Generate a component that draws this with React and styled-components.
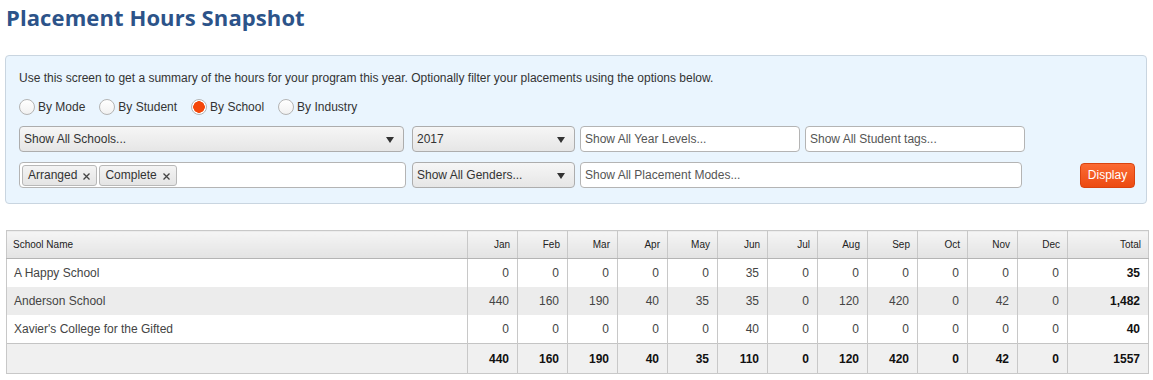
import React from "react";
import styled, { createGlobalStyle } from "styled-components";

const Global = createGlobalStyle`
  html, body { margin: 0; padding: 0; background: #fff; }
  body { font-family: "Liberation Sans", Arial, sans-serif; color: #333; }
`;

const Page = styled.div`
  padding: 3px 5px 0 5px;
`;

const Title = styled.h1`
  margin: 0 0 24px 1px;
  font-family: "Open Sans", "Liberation Sans", sans-serif;
  font-weight: 700;
  font-size: 22px;
  line-height: 28px;
  color: #2c5389;
  letter-spacing: 0.1px;
`;

const Panel = styled.section`
  width: 1142px;
  box-sizing: border-box;
  background: #eaf5fe;
  border: 1px solid #c9d5e0;
  border-radius: 4px;
  padding: 14px 10px 15px 13px;
  display: flex;
  flex-direction: column;
`;

const Intro = styled.p`
  margin: 0;
  font-size: 12px;
  line-height: 16px;
  color: #333;
`;

const RadioRow = styled.div`
  display: flex;
  align-items: center;
  gap: 14px;
  height: 20px;
  margin-top: 11px;
`;

const RadioLabel = styled.label`
  display: flex;
  align-items: center;
  gap: 3px;
  font-size: 12px;
  color: #333;
`;

const RadioDot = styled.span`
  width: 16px;
  height: 16px;
  box-sizing: border-box;
  border-radius: 50%;
  border: 1px solid #b4b4b4;
  background: ${(p) =>
    p.$on
      ? "radial-gradient(circle, #f4470a 0, #f4470a 5.5px, #fff 6px)"
      : "linear-gradient(#fff, #f1f1f1)"};
`;

const FieldRow = styled.div`
  display: flex;
  align-items: center;
  margin-top: ${(p) => p.$top}px;
`;

const Select = styled.div`
  position: relative;
  box-sizing: border-box;
  width: ${(p) => p.$w}px;
  margin-left: ${(p) => p.$ml || 0}px;
  height: 26px;
  border: 1px solid #adadad;
  border-radius: 4px;
  background: linear-gradient(#f6f6f6, #e6e6e6);
  font-size: 12px;
  line-height: 24px;
  padding-left: 4px;
  color: #333;
  &::after {
    content: "";
    position: absolute;
    right: 9px;
    top: 10px;
    border-left: 4px solid transparent;
    border-right: 4px solid transparent;
    border-top: 6px solid #333;
  }
`;

const TextBox = styled.div`
  box-sizing: border-box;
  width: ${(p) => p.$w}px;
  margin-left: ${(p) => p.$ml || 0}px;
  height: 26px;
  border: 1px solid #b4b4b4;
  border-radius: 4px;
  background: #fff;
  font-size: 12px;
  line-height: 24px;
  padding-left: 4px;
  color: #555;
  display: flex;
  align-items: center;
  gap: 2px;
`;

const TagBox = styled(TextBox)`
  padding-left: 2px;
`;

const Chip = styled.span`
  display: inline-flex;
  align-items: center;
  box-sizing: border-box;
  height: 21px;
  padding: 0 5px 0 5px;
  border: 1px solid #b8b8b8;
  border-radius: 3px;
  background: linear-gradient(#f4f4f4, #e4e4e4);
  color: #333;
  font-size: 12px;
  gap: 5px;
`;

const ChipX = styled.svg`
  width: 9px;
  height: 9px;
  margin-top: 2px;
`;

const Spacer = styled.div`
  flex: 1;
`;

const DisplayButton = styled.button`
  box-sizing: border-box;
  width: 55px;
  height: 25px;
  border: 1px solid #d9430f;
  border-radius: 4px;
  background: linear-gradient(#fb6a33, #ec4b12);
  color: #fff;
  font-family: "Liberation Sans", Arial, sans-serif;
  font-size: 12px;
  padding: 0;
  margin-right: 1px;
`;

const Table = styled.table`
  margin-top: 26px;
  margin-left: 1px;
  width: 1142px;
  table-layout: fixed;
  border-collapse: collapse;
  font-size: 12px;
  border: 1px solid #c8c8c8;
`;

const HeadCell = styled.th`
  height: 27px;
  padding: 0 7px 0 6px;
  font-size: 10px;
  font-weight: 400;
  color: #222;
  text-align: ${(p) => (p.$left ? "left" : "right")};
  background: linear-gradient(#f5f5f5, #e3e3e3);
  border-left: 1px solid #c8c8c8;
  border-bottom: 1px solid #b4b4b4;
`;

const Row = styled.tr`
  background: ${(p) => (p.$alt ? "#ececec" : "#fff")};
`;

const Cell = styled.td`
  height: 28px;
  padding: 0 8px 0 7px;
  color: ${(p) => (p.$bold ? "#111" : "#444")};
  font-weight: ${(p) => (p.$bold ? 700 : 400)};
  text-align: ${(p) => (p.$left ? "left" : "right")};
  border-left: 1px solid #c8c8c8;
`;

const FootRow = styled.tr`
  background: #f0f0f0;
  border-top: 1px solid #c4c4c4;
`;

const FootCell = styled.td`
  height: 29px;
  padding: 0 8px 0 7px;
  color: #111;
  font-weight: 700;
  text-align: right;
  border-left: 1px solid #c8c8c8;
`;

const months = ["Jan", "Feb", "Mar", "Apr", "May", "Jun", "Jul", "Aug", "Sep", "Oct", "Nov", "Dec"];

const rows = [
  { name: "A Happy School", v: [0, 0, 0, 0, 0, 35, 0, 0, 0, 0, 0, 0], total: "35" },
  { name: "Anderson School", v: [440, 160, 190, 40, 35, 35, 0, 120, 420, 0, 42, 0], total: "1,482" },
  { name: "Xavier's College for the Gifted", v: [0, 0, 0, 0, 0, 40, 0, 0, 0, 0, 0, 0], total: "40" },
];

const totals = [440, 160, 190, 40, 35, 110, 0, 120, 420, 0, 42, 0];

const X = () => (
  <ChipX viewBox="0 0 9 9">
    <path d="M1.5 1.5 L7.5 7.5 M7.5 1.5 L1.5 7.5" stroke="#444" strokeWidth="1.3" fill="none" />
  </ChipX>
);

const radios = [
  ["By Mode", false],
  ["By Student", false],
  ["By School", true],
  ["By Industry", false],
];

export default function App() {
  return (
    <>
      <Global />
      <Page>
        <Title>Placement Hours Snapshot</Title>
        <Panel>
          <Intro>
            Use this screen to get a summary of the hours for your program this year. Optionally filter your
            placements using the options below.
          </Intro>
          <RadioRow>
            {radios.map(([label, on]) => (
              <RadioLabel key={label}>
                <RadioDot $on={on} />
                {label}
              </RadioLabel>
            ))}
          </RadioRow>
          <FieldRow $top={9}>
            <Select $w={385}>Show All Schools...</Select>
            <Select $w={163} $ml={8}>2017</Select>
            <TextBox $w={220} $ml={5}>Show All Year Levels...</TextBox>
            <TextBox $w={220} $ml={5}>Show All Student tags...</TextBox>
          </FieldRow>
          <FieldRow $top={10}>
            <TagBox $w={387}>
              <Chip>
                Arranged <X />
              </Chip>
              <Chip>
                Complete <X />
              </Chip>
            </TagBox>
            <Select $w={163} $ml={6}>Show All Genders...</Select>
            <TextBox $w={442} $ml={5}>Show All Placement Modes...</TextBox>
            <Spacer />
            <DisplayButton>Display</DisplayButton>
          </FieldRow>
        </Panel>
        <Table>
          <colgroup>
            <col style={{ width: 461 }} />
            {months.map((m) => (
              <col key={m} style={{ width: 50 }} />
            ))}
            <col style={{ width: 81 }} />
          </colgroup>
          <thead>
            <tr>
              <HeadCell $left>School Name</HeadCell>
              {months.map((m) => (
                <HeadCell key={m}>{m}</HeadCell>
              ))}
              <HeadCell>Total</HeadCell>
            </tr>
          </thead>
          <tbody>
            {rows.map((r, i) => (
              <Row key={r.name} $alt={i === 1}>
                <Cell $left>{r.name}</Cell>
                {r.v.map((v, j) => (
                  <Cell key={j}>{v}</Cell>
                ))}
                <Cell $bold>{r.total}</Cell>
              </Row>
            ))}
          </tbody>
          <tfoot>
            <FootRow>
              <FootCell />
              {totals.map((v, j) => (
                <FootCell key={j}>{v}</FootCell>
              ))}
              <FootCell>1557</FootCell>
            </FootRow>
          </tfoot>
        </Table>
      </Page>
    </>
  );
}
